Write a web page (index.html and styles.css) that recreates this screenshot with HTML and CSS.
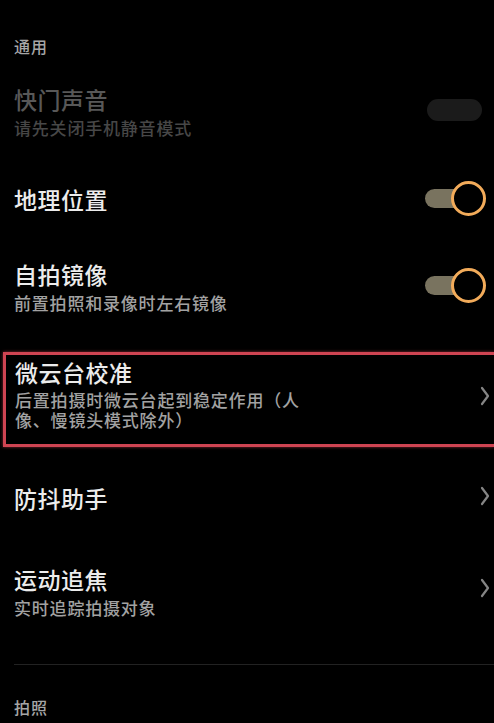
FILE: index.html
```html
<!DOCTYPE html>
<html lang="zh-CN">

<head>
    <meta charset="UTF-8">
    <meta name="viewport" content="width=device-width, initial-scale=1.0">
    <title>相机设置</title>
    <link rel="stylesheet" href="styles.css">
</head>

<body>
    <div class="settings">
        <div class="group-title group-first">通用</div>

        <div class="row row-shutter disabled">
            <div class="text">
                <div class="title">快门声音</div>
                <div class="sub">请先关闭手机静音模式</div>
            </div>
            <div class="switch-off"></div>
        </div>

        <div class="row row-location">
            <div class="text">
                <div class="title">地理位置</div>
            </div>
            <div class="switch-on"><span class="track"></span><span class="knob"></span></div>
        </div>

        <div class="row row-mirror">
            <div class="text">
                <div class="title">自拍镜像</div>
                <div class="sub">前置拍照和录像时左右镜像</div>
            </div>
            <div class="switch-on"><span class="track"></span><span class="knob"></span></div>
        </div>

        <!-- highlighted item -->
        <div class="row row-gimbal marked">
            <div class="text">
                <div class="title">微云台校准</div>
                <div class="sub sub-wrap">后置拍摄时微云台起到稳定作用（人像、慢镜头模式除外）</div>
            </div>
            <svg class="chevron" width="10" height="20" viewBox="0 0 10 20"><path d="M2 2 L8 10 L2 18" fill="none" stroke="#858585" stroke-width="2.2" stroke-linecap="round" stroke-linejoin="round"/></svg>
        </div>

        <div class="row row-stab">
            <div class="text">
                <div class="title">防抖助手</div>
            </div>
            <svg class="chevron" width="10" height="20" viewBox="0 0 10 20"><path d="M2 2 L8 10 L2 18" fill="none" stroke="#858585" stroke-width="2.2" stroke-linecap="round" stroke-linejoin="round"/></svg>
        </div>

        <div class="row row-track">
            <div class="text">
                <div class="title">运动追焦</div>
                <div class="sub">实时追踪拍摄对象</div>
            </div>
            <svg class="chevron" width="10" height="20" viewBox="0 0 10 20"><path d="M2 2 L8 10 L2 18" fill="none" stroke="#858585" stroke-width="2.2" stroke-linecap="round" stroke-linejoin="round"/></svg>
        </div>

        <div class="divider"></div>

        <div class="group-title group-photo">拍照</div>
    </div>
</body>

</html>
```

FILE: styles.css
```css
body {
    margin: 0;
    background: #000;
    color: #ececec;
    font-family: "Noto Sans CJK SC", "Noto Sans", sans-serif;
    overflow: hidden;
}

.settings {
    width: 494px;
}

.group-title {
    font-size: 16px;
    line-height: 20px;
    letter-spacing: 1px;
    font-weight: 500;
    color: #a6a6a6;
    padding-left: 14px;
}

.group-first {
    padding-top: 36px;
    padding-bottom: 14px;
}

.group-photo {
    padding-top: 32px;
}

.row {
    display: flex;
    align-items: center;
    justify-content: space-between;
    padding-left: 14px;
    box-sizing: border-box;
}

.row-shutter {
    height: 85px;
}

.row-location {
    height: 87px;
}

.row-mirror {
    height: 92px;
}

.row-stab {
    height: 101px;
}

.row-track {
    height: 90px;
}

.title {
    font-size: 23px;
    line-height: 30px;
    letter-spacing: 0.5px;
    font-weight: 500;
    color: #ececec;
}

.sub {
    font-size: 17px;
    line-height: 28px;
    letter-spacing: 0.8px;
    font-weight: 500;
    color: #a2a2a2;
}

.disabled .title {
    color: #585858;
}

.disabled .sub {
    color: #474747;
}

/* red annotation box around the gimbal item */
.marked {
    margin-top: 18px;
    margin-left: 3px;
    height: 95px;
    padding: 2px 0 14px 9px;
    border: 3px solid #cf4452;
    border-right: none;
    box-shadow: 0 0 3px rgba(220, 70, 85, 0.6);
    align-items: flex-start;
}

.marked .title {
    margin-bottom: 3px;
}

.sub-wrap {
    max-width: 290px;
    line-height: 20px;
}

.marked .chevron {
    margin-top: 29px;
}

.switch-off {
    width: 55px;
    height: 22px;
    border-radius: 11px;
    background: #1b1b1b;
    margin-right: 12px;
    margin-top: -6px;
}

.switch-on {
    position: relative;
    width: 61px;
    height: 35px;
    margin-right: 8px;
    flex-shrink: 0;
}

.switch-on .track {
    position: absolute;
    left: 0;
    top: 8px;
    width: 40px;
    height: 19px;
    border-radius: 10px 0 0 10px;
    background: #79735f;
}

.switch-on .knob {
    position: absolute;
    right: 0;
    top: 0;
    width: 35px;
    height: 35px;
    box-sizing: border-box;
    border-radius: 50%;
    border: 3.5px solid #f2ab5a;
    background: #000;
}

.row-mirror .switch-on {
    margin-top: -6px;
}

.chevron {
    flex-shrink: 0;
    margin-right: 4px;
}

.row-stab .chevron {
    margin-bottom: 4px;
}

.row-track .chevron {
    margin-bottom: 10px;
}

.divider {
    height: 1px;
    background: #222;
    margin: 26px 0 0 14px;
}
```
